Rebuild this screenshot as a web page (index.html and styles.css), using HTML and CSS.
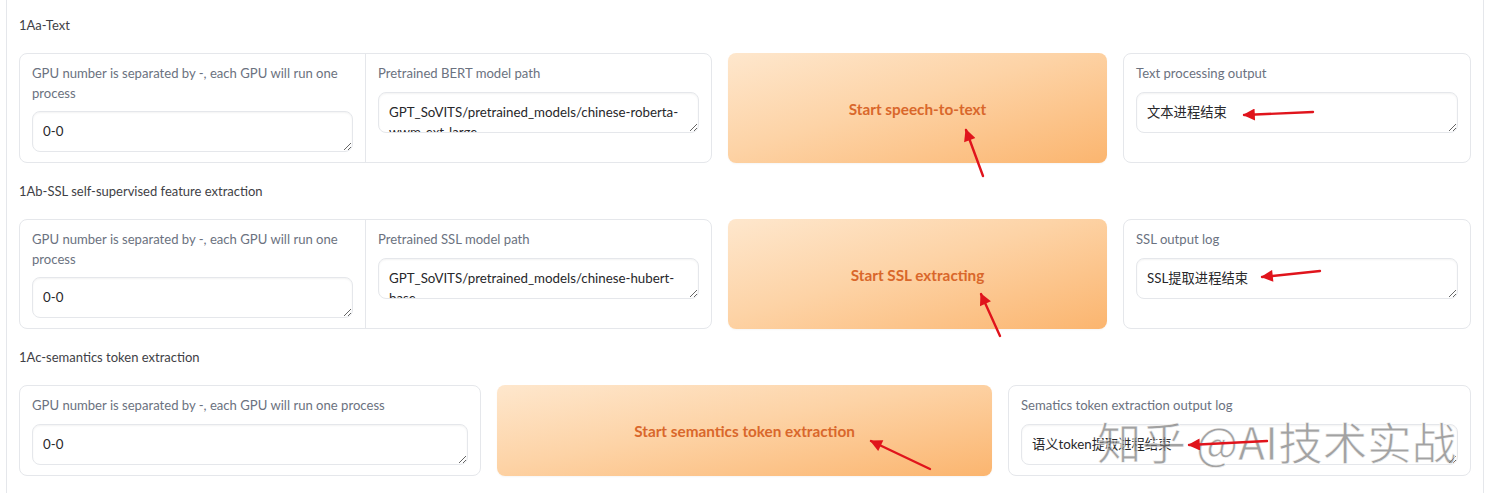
FILE: index.html
```html
<!DOCTYPE html>
<html lang="en">
<head>
<meta charset="utf-8">
<title>GPT-SoVITS 1A</title>
<link rel="stylesheet" href="styles.css">
</head>
<body>
<div class="page">
  <div class="panel">
    <div class="section-title">1Aa-Text</div>
    <div class="row">
      <div class="box group g-a">
        <div class="field">
          <label class="label two-line">GPU number is separated by -, each GPU will run one process</label>
          <textarea class="input" rows="1">0-0</textarea>
        </div>
        <div class="field">
          <label class="label">Pretrained BERT model path</label>
          <textarea class="input" rows="1">GPT_SoVITS/pretrained_models/chinese-roberta-wwm-ext-large</textarea>
        </div>
      </div>
      <button class="btn b-a">Start speech-to-text</button>
      <div class="box o-a">
        <div class="field">
          <label class="label">Text processing output</label>
          <textarea class="input" rows="1">文本进程结束</textarea>
        </div>
      </div>
    </div>

    <div class="section-title">1Ab-SSL self-supervised feature extraction</div>
    <div class="row">
      <div class="box group g-a">
        <div class="field">
          <label class="label two-line">GPU number is separated by -, each GPU will run one process</label>
          <textarea class="input" rows="1">0-0</textarea>
        </div>
        <div class="field">
          <label class="label">Pretrained SSL model path</label>
          <textarea class="input" rows="1">GPT_SoVITS/pretrained_models/chinese-hubert-base</textarea>
        </div>
      </div>
      <button class="btn b-a">Start SSL extracting</button>
      <div class="box o-a">
        <div class="field">
          <label class="label">SSL output log</label>
          <textarea class="input" rows="1">SSL提取进程结束</textarea>
        </div>
      </div>
    </div>

    <div class="section-title">1Ac-semantics token extraction</div>
    <div class="row">
      <div class="box g-c">
        <div class="field">
          <label class="label">GPU number is separated by -, each GPU will run one process</label>
          <textarea class="input" rows="1">0-0</textarea>
        </div>
      </div>
      <button class="btn b-c">Start semantics token extraction</button>
      <div class="box o-c">
        <div class="field">
          <label class="label">Sematics token extraction output log</label>
          <textarea class="input" rows="1">语义token提取进程结束</textarea>
        </div>
      </div>
    </div>
  </div>

  <div class="watermark">知乎 @AI技术实战</div>

  <svg class="annotations" width="1496" height="493" viewBox="0 0 1496 493" aria-hidden="true">
    <defs>
      <marker id="head" viewBox="0 0 10 10" refX="9" refY="5" markerWidth="6" markerHeight="5" orient="auto" markerUnits="strokeWidth">
        <path d="M0 0 L10 5 L0 10 Z" fill="#e0141c"/>
      </marker>
    </defs>
    <g stroke="#e0141c" stroke-width="2.4" stroke-linecap="round" fill="none">
      <line x1="983" y1="176" x2="966" y2="130" marker-end="url(#head)"/>
      <line x1="1313" y1="112" x2="1244" y2="115" marker-end="url(#head)"/>
      <line x1="1000" y1="336" x2="981" y2="294" marker-end="url(#head)"/>
      <line x1="1320" y1="271" x2="1262" y2="277" marker-end="url(#head)"/>
      <line x1="930" y1="469" x2="871" y2="441" marker-end="url(#head)"/>
      <line x1="1267" y1="441" x2="1189" y2="445" marker-end="url(#head)"/>
    </g>
  </svg>
</div>
</body>
</html>
```

FILE: styles.css
```css
* { box-sizing: border-box; }

html, body {
  margin: 0;
  padding: 0;
  background: #ffffff;
}

body {
  font-family: Lato, "Noto Sans", "Noto Sans CJK SC", sans-serif;
  color: #374151;
}

.page {
  position: relative;
  width: 1496px;
  height: 493px;
  overflow: hidden;
}

.panel {
  margin: 0 12px 0 6px;
  padding: 0 12px 40px 12px;
  border-left: 1px solid #e5e7eb;
  border-right: 1px solid #e5e7eb;
}

.section-title {
  font-size: 13px;
  line-height: 24px;
  color: #3f3f46;
  padding: 13px 0 16px 0;
}

.row + .section-title {
  padding-top: 16px;
}

.row {
  display: flex;
  gap: 16px;
  align-items: stretch;
}

.box {
  border: 1px solid #e5e7eb;
  border-radius: 8px;
  background: #ffffff;
  display: flex;
}

.group .field + .field {
  border-left: 1px solid #e5e7eb;
}

.field {
  flex: 1 1 0;
  display: flex;
  flex-direction: column;
  padding: 9px 12px 10px 12px;
  min-width: 0;
}

.label {
  display: block;
  font-size: 13.1px;
  line-height: 20px;
  color: #6b7280;
  margin-bottom: 9px;
}

.label.two-line {
  margin-bottom: 8px;
}

.input {
  display: block;
  width: 100%;
  height: 41px;
  border: 1px solid #e5e7eb;
  border-radius: 8px;
  padding: 9px 10px;
  font-family: Lato, "Noto Sans CJK SC", sans-serif;
  font-size: 13.3px;
  line-height: 20px;
  color: #27272a;
  background: #ffffff;
  box-shadow: inset 0 1px 2px rgba(0, 0, 0, 0.05);
  overflow: hidden;
  resize: vertical;
  outline: none;
}

.btn {
  border: none;
  border-radius: 8px;
  padding: 1px 6px 0 6px;
  background: linear-gradient(to bottom right, #fee7cd 0%, #fdd3a6 45%, #fbb56f 100%);
  color: #d9672b;
  font-family: Lato, "Noto Sans", sans-serif;
  font-weight: 700;
  font-size: 15.3px;
  cursor: pointer;
  box-shadow: 0 1px 2px rgba(0, 0, 0, 0.04);
}

.g-a, .b-a, .o-a, .g-c, .b-c, .o-c { flex: none; }

.g-a { width: 693px; }
.b-a { width: 379px; }
.o-a { width: 348px; }

.g-c { width: 462px; }
.b-c { width: 495px; }
.o-c { width: 463px; }

.watermark {
  position: absolute;
  left: 1097px;
  top: 411px;
  font-family: "Noto Sans CJK SC", "Noto Sans", sans-serif;
  font-size: 44.5px;
  line-height: 60px;
  color: rgba(120, 120, 120, 0.7);
  -webkit-text-stroke: 1px rgba(255, 255, 255, 0.8);
  white-space: nowrap;
  pointer-events: none;
}

.annotations {
  position: absolute;
  left: 0;
  top: 0;
  pointer-events: none;
}
```
